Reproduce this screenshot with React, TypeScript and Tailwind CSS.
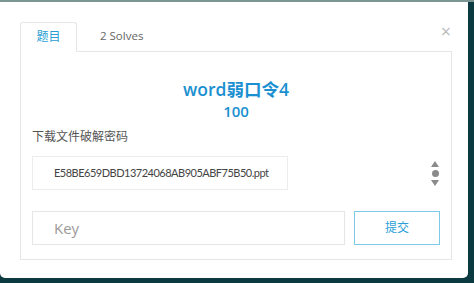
import React from "react";

function ScrollArrows() {
  return (
    <div className="flex flex-col items-center gap-[3px] text-[#8a8a8a]">
      <svg width="8" height="6" viewBox="0 0 8 6">
        <path d="M4 0 L8 6 L0 6 Z" fill="currentColor" />
      </svg>
      <span className="h-[7px] w-[7px] rounded-full bg-[#8a8a8a]" />
      <svg width="8" height="6" viewBox="0 0 8 6">
        <path d="M0 0 L8 0 L4 6 Z" fill="currentColor" />
      </svg>
    </div>
  );
}

export default function App() {
  return (
    <div
      className="flex h-[283px] w-[474px] flex-col bg-[#0c3a41]"
      style={{ fontFamily: '"Open Sans", "Noto Sans CJK SC", sans-serif' }}
    >
      <div className="h-[2px] bg-[#7b9593]" />
      <div className="flex">
        <div className="relative h-[276px] w-[468px] rounded-b-[5px] bg-white pl-[20px] pr-[16px] pt-[20px]">
          <button className="absolute right-[17px] top-[20px] text-[18px] leading-none text-[#bbbbbb]">
            ×
          </button>
          <div className="flex h-[30px] items-end border-b border-[#e6e6e6]">
            <div className="-mb-px flex h-[30px] w-[57px] items-center justify-center rounded-t-[3px] border border-b-white border-[#e6e6e6] bg-white text-[12px] text-[#2a9fd6]">
              题目
            </div>
            <div className="flex h-[30px] items-center pl-[23px] text-[11.5px] text-[#666666]">
              2 Solves
            </div>
          </div>
          <div className="h-[208px] w-[432px] border border-t-0 border-[#e6e6e6] px-[11px]">
            <div className="pt-[24px] text-center text-[17.5px] font-semibold leading-[26px] text-[#1a90d1]">
              word弱口令4
            </div>
            <div className="text-center text-[15px] font-semibold leading-[18px] text-[#1a90d1]">
              100
            </div>
            <div className="mt-[8px] text-[12px] leading-[18px] text-[#555555]">
              下载文件破解密码
            </div>
            <div className="mt-[10px] flex items-center justify-between">
              <div
                className="flex h-[34px] w-[256px] items-center border border-[#ececec] pl-[21px] text-[11px] tracking-[-0.5px] text-[#444444]"
                style={{ fontFamily: 'Lato, "Noto Sans CJK SC", sans-serif' }}
              >
                E58BE659DBD13724068AB905ABF75B50.ppt
              </div>
              <div className="mr-[1px]">
                <ScrollArrows />
              </div>
            </div>
            <div className="mt-[21px] flex items-center gap-[9px]">
              <div className="flex h-[34px] w-[316px] items-center border border-[#e6e6e6] pl-[21px] text-[15px] text-[#9a9a9a]">
                Key
              </div>
              <button className="flex h-[34px] w-[87px] items-center justify-center border border-[#7cc8e6] text-[12px] text-[#2a9fd6]">
                提交
              </button>
            </div>
          </div>
        </div>
      </div>
    </div>
  );
}
